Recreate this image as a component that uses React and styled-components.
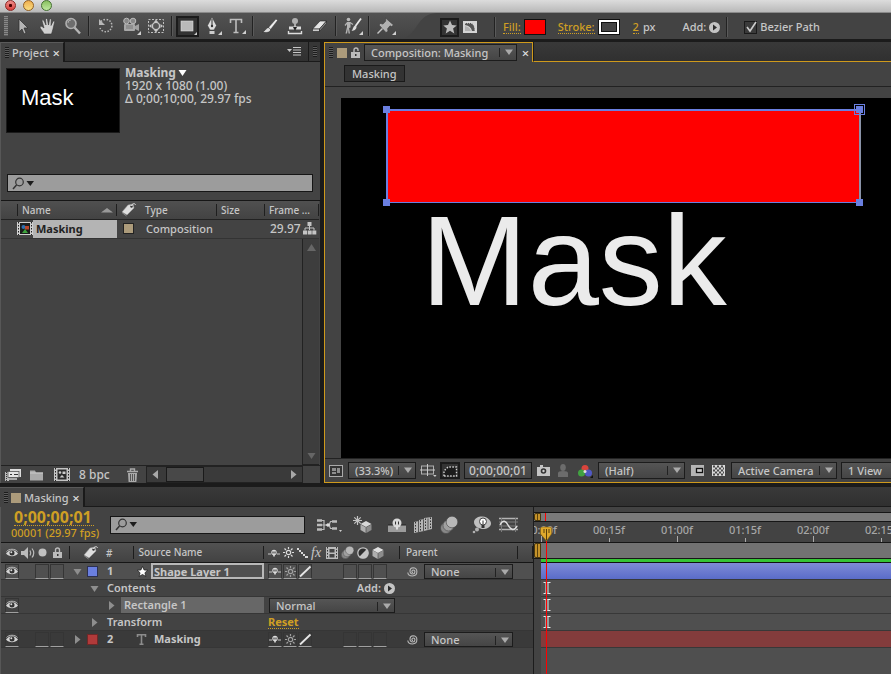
import React, { useState } from "react";
import styled, { createGlobalStyle } from "styled-components";

const GlobalStyle = createGlobalStyle`
  * {
    box-sizing: border-box;
  }
  body {
    margin: 0;
    background: #434343;
    color: #c6c6c6;
    font: 500 11px/14px "Noto Sans", "Open Sans", sans-serif;
  }
  button, input, select {
    font: inherit;
    color: inherit;
    margin: 0;
    padding: 0;
    border: 0;
    border-radius: 0;
    background: none;
  }
`;

/* ---------- icons ---------- */

const Svg = styled.svg`
  display: block;
  flex: none;
  overflow: visible;
`;

const Icon = ({ w = 16, h = 16, children }) => (
  <Svg width={w} height={h} viewBox={`0 0 ${w} ${h}`} fill="none" aria-hidden="true">
    {children}
  </Svg>
);

const Corner = () => <path d="M18 17v-4l-4 4z" fill="#d0d0d0" />;

const ArrowIcon = () => (
  <Icon w={20} h={18}>
    <path d="M6 2v13l3-3 2 5 2-1-2-5h4z" fill="#b4b4b4" stroke="#2c2c2c" strokeWidth=".7" />
  </Icon>
);

const HandIcon = () => (
  <Icon w={20} h={18}>
    <path
      d="M6 17C5 14 2 12 2 10c0-1 2-1 4 1L4 4c0-1.500 1.500-1.500 2-.2L8 8 7.500 2.500c0-1.500 1.800-1.500 2 0L10.500 8l1-5.500c.3-1.300 1.900-1 1.800.3L13 8.500l2-4c.6-1 2-.5 1.600.7L15 12c-.5 2-1 3-1.500 5z"
      fill="#cfcfcf"
      stroke="#333"
      strokeWidth=".6"
    />
  </Icon>
);

const ZoomIcon = () => (
  <Icon w={20} h={18}>
    <circle cx="8" cy="6.500" r="5" fill="#6e6e6e" stroke="#b0b0b0" strokeWidth="1.600" />
    <path d="M5 6a3 3 0 0 1 3-3" stroke="#aaa" />
    <path d="M11.500 10.500l5.500 6" stroke="#b5b5b5" strokeWidth="2.400" />
  </Icon>
);

const RotateIcon = () => (
  <Icon w={20} h={18}>
    <path d="M5 4.500A6.200 6.200 0 1 1 4 11" stroke="#b8b8b8" strokeWidth="1.500" strokeDasharray="1.500 1.500" />
    <path d="M3 2v6h6z" fill="#b8b8b8" />
  </Icon>
);

const CameraIcon = () => (
  <Icon w={20} h={18}>
    <circle cx="5.500" cy="4" r="2.800" fill="#888" stroke="#bbb" />
    <circle cx="12" cy="4" r="2.800" fill="#888" stroke="#bbb" />
    <rect x="3" y="7" width="11" height="7" rx="1" fill="#a8a8a8" />
    <path d="M5 9h7M5 11h7" stroke="#777" />
    <path d="M14 9l4-2v7l-4-2z" fill="#a0a0a0" />
    <path d="M20 18v-4l-4 4z" fill="#d0d0d0" />
  </Icon>
);

const PanBehindIcon = () => (
  <Icon w={18} h={18}>
    <rect x="1.500" y="2.500" width="15" height="13" stroke="#c0c0c0" strokeDasharray="2 1.500" />
    <circle cx="9" cy="9" r="3.600" fill="#555" stroke="#c8c8c8" strokeWidth="1.400" />
    <path d="M9 2.500l2 2.500H7zM9 15.500L7 13h4zM2 9l2.500-2v4zM16 9l-2.500 2V7z" fill="#c8c8c8" />
  </Icon>
);

const RectIcon = () => (
  <Icon w={21} h={19}>
    <rect x="4" y="4" width="12" height="10" fill="#b9b9b9" stroke="#dedede" strokeWidth=".6" />
    <path d="M20 18v-3l-3 3z" fill="#d0d0d0" />
  </Icon>
);

const PenIcon = () => (
  <Icon w={20} h={18}>
    <path d="M10 0l4.500 8.500-2.500 4.500h-4L5.500 8.500z" fill="#ddd" stroke="#333" strokeWidth=".5" />
    <path d="M10 2v7" stroke="#333" />
    <circle cx="10" cy="9" r="1.200" fill="#333" />
    <path d="M7.500 14h5v3h-5z" fill="#ccc" />
    <path d="M20 18v-4l-4 4z" fill="#d0d0d0" />
  </Icon>
);

const TypeIcon = () => (
  <Icon w={18} h={18}>
    <path d="M2.500 6V2.500h11V6M8 2.500v12.500M5.500 15.500h5" stroke="#bdbdbd" strokeWidth="1.600" />
    <Corner />
  </Icon>
);

const BrushIcon = () => (
  <Icon w={20} h={18}>
    <path d="M8.500 10.500L16 2l1.500 1.500-7 9z" fill="#eee" stroke="#333" strokeWidth=".4" />
    <path d="M9 10.500c-3 0-3 3-6.500 4.500 4 1 8 .5 8-2.500z" fill="#ddd" stroke="#222" strokeWidth=".5" />
  </Icon>
);

const StampIcon = () => (
  <Icon w={18} h={18}>
    <circle cx="9" cy="4" r="3" fill="#b0b0b0" />
    <path d="M8 6h2v4H8z" fill="#aaa" />
    <path d="M3 9.500h12v3H3z" fill="#ddd" />
    <path d="M7 10h4l-2 4z" fill="#222" />
    <path d="M2.500 14v2.500h13V14" stroke="#ddd" strokeWidth="1.400" />
  </Icon>
);

const EraserIcon = () => (
  <Icon w={20} h={18}>
    <path d="M2.500 12L10 4h6.500L9.500 12z" fill="#e6e6e6" stroke="#222" strokeWidth=".6" />
    <path d="M2.500 12v2.500h7V12z" fill="#ccc" stroke="#222" strokeWidth=".6" />
    <path d="M9.500 14.500l7-8V4l-7 8z" fill="#888" stroke="#222" strokeWidth=".6" />
  </Icon>
);

const RotoIcon = () => (
  <Icon w={20} h={18}>
    <circle cx="5.500" cy="2.500" r="1.800" fill="#bbb" />
    <path d="M4 5h3.500v5.500L6 11l1 5.500H5.500L5 12l-1 4.500H2.500L4 10z" fill="#b4b4b4" />
    <path d="M4.500 5.500L2 8.500M7 5.500l3 2" stroke="#b4b4b4" strokeWidth="1.200" />
    <path d="M12.500 9L18 1.500" stroke="#e8e8e8" strokeWidth="1.800" />
    <path d="M13.500 9.500c0 3-2 4-5 4.500 1.500-1.500 1.500-4.500 3.500-5.500z" fill="#ddd" />
    <path d="M20 18v-4l-4 4z" fill="#d0d0d0" />
  </Icon>
);

const PinIcon = () => (
  <Icon w={20} h={18}>
    <path d="M9.500 1l8 7-2 1.500-1.500-.7-2.500 3 .5 2.500-2 1.200L3 8l1.500-1.500 2.500.6 2.800-3z" fill="#b0b0b0" stroke="#333" strokeWidth=".5" />
    <path d="M6.500 11.500L1.500 16.500" stroke="#c4c4c4" strokeWidth="1.500" />
    <path d="M20 18v-4l-4 4z" fill="#d0d0d0" />
  </Icon>
);

const StarIcon = ({ size = 14, fill = "#bcbcbc", stroke = "none" }) => (
  <Svg width={size} height={size} viewBox="0 0 14 14" aria-hidden="true">
    <path d="M7 .5l2 4.500 4.700.4-3.600 3.200 1.200 4.800L7 10.800l-4.300 2.600 1.200-4.800L.3 5.400 5 5z" fill={fill} stroke={stroke} />
  </Svg>
);

const MaskIcon = () => (
  <Icon w={14} h={14}>
    <path d="M0 1h14v12H0z" fill="#d4d4d4" />
    <path d="M2 3h6q4 1.500 4 8H9Q8 6 2 5z" fill="#555" />
    <path d="M2 6q5 1 6 5H2z" fill="#b0b0b0" />
    <path d="M2 3h6q4 1.500 4 8" stroke="#eee" strokeDasharray="1 1" />
  </Icon>
);

const MenuIcon = () => (
  <Icon w={14} h={9}>
    <path d="M0 2h5L2.500 5z" fill="#c8c8c8" />
    <path d="M6 .5h8M6 3h8M6 5.500h8M6 8h8" stroke="#c8c8c8" />
  </Icon>
);

const LockIcon = ({ open }) => (
  <Icon w={9} h={11}>
    <path d={open ? "M3 5V3a2 2 0 0 1 4 0v1" : "M2.500 5V3a2 2 0 0 1 4 0v2"} stroke="#bbb" strokeWidth="1.400" />
    <path d="M0 5h9v6H0z" fill="#bbb" />
    <path d="M4 7h1.500v2H4z" fill="#333" />
  </Icon>
);

const SearchIcon = () => (
  <Icon w={22} h={13}>
    <circle cx="7.500" cy="5" r="3.800" stroke="#333" strokeWidth="1.200" />
    <path d="M4.500 8L1 12" stroke="#333" strokeWidth="1.500" />
    <path d="M14.500 4H22l-3.700 5z" fill="#1c1c1c" />
  </Icon>
);

const CompIcon = () => (
  <Icon w={16} h={13}>
    <rect width="16" height="13" fill="#d0d0d0" />
    <path d="M1.500 0v13M14.500 0v13" stroke="#222" strokeDasharray="1.500 1.500" />
    <rect x="3" y="1" width="10" height="11" fill="#1c1c1c" />
    <circle cx="6.500" cy="5" r="2" fill="#2d6fb0" />
    <rect x="8" y="4" width="4" height="3.500" fill="#b8452c" />
    <path d="M5 11l3-4 3 4z" fill="#3da43d" />
  </Icon>
);

const TagIcon = () => (
  <Icon w={15} h={13}>
    <path d="M1 9l6-7 5-1 1 4-7 7z" fill="#ddd" stroke="#999" strokeWidth=".5" />
    <circle cx="10.500" cy="3.500" r="1.200" fill="#333" />
    <path d="M10 3c2-3 4-3 4.500-1" stroke="#ddd" />
    <path d="M1 9.500L5.500 13" stroke="#888" />
  </Icon>
);

const SortIcon = () => (
  <Icon w={12} h={6}>
    <path d="M0 5.500L6 1l6 4.500z" fill="#999" />
  </Icon>
);

const FlowIcon = () => (
  <Icon w={13} h={13}>
    <path d="M4.500 0h4v4h-4zM0 8.500h4v4H0zM4.700 8.500h4v4h-4zM9.300 8.500h4v4h-4z" fill="#c4c4c4" />
    <path d="M6.500 4v4M2 8.500V6h9v2.500" stroke="#c4c4c4" />
  </Icon>
);

const FootageIcon = () => (
  <Icon w={16} h={13}>
    <path d="M5 1h11v8H5z" fill="#ddd" />
    <path d="M0 4h13v5H4v4H0z" fill="#bbb" />
    <rect x="3" y="3.500" width="11" height="6" fill="#e4e4e4" stroke="#555" strokeWidth=".8" />
    <path d="M5 6.500h2M9 6.500h4" stroke="#333" />
    <path d="M1.500 4v9" stroke="#333" strokeDasharray="1 1" />
    <path d="M4 11h8" stroke="#ccc" strokeWidth="1.500" />
  </Icon>
);

const FolderIcon = () => (
  <Icon w={14} h={12}>
    <path d="M0 1.500h5l1 2h7v8H0z" fill="#aaa" />
    <path d="M0 4h13" stroke="#ccc" />
  </Icon>
);

const FilmIcon = () => (
  <Icon w={16} h={13}>
    <rect width="16" height="13" fill="#c4c4c4" />
    <path d="M1.500 0v13M14.500 0v13" stroke="#222" strokeDasharray="1.500 1.500" />
    <rect x="3.500" y="1.500" width="9" height="10" fill="#2c2c2c" />
    <circle cx="6" cy="4.500" r="1.300" fill="#ccc" />
    <path d="M8.500 3.500h3v2.500h-3zM5.500 9.500L8 7l2.500 2.500z" fill="#ccc" />
  </Icon>
);

const TrashIcon = () => (
  <Icon w={11} h={14}>
    <path d="M0 3.500h11M3.500 3V1h4v2" stroke="#aaa" strokeWidth="1.400" />
    <path d="M1 5h9l-.6 9H1.600z" fill="#aaa" />
    <path d="M3.500 6v7M5.500 6v7M7.500 6v7" stroke="#555" />
  </Icon>
);

const Triangle = ({ dir = "down", fill = "#a8a8a8" }) => (
  <Icon w={9} h={9}>
    {dir === "down" && <path d="M.5 2h8l-4 6z" fill={fill} />}
    {dir === "up" && <path d="M0 8h9L4.500 1z" fill={fill} />}
    {dir === "right" && <path d="M2 0v9l5.500-4.500z" fill={fill} />}
    {dir === "left" && <path d="M7 0v9L1.500 4.500z" fill={fill} />}
  </Icon>
);

const PlayCircle = () => (
  <Icon w={11} h={11}>
    <circle cx="5.500" cy="5.500" r="5.500" fill="#c4c4c4" />
    <path d="M4 2.500v6l4-3z" fill="#2c2c2c" />
  </Icon>
);

const EyeIcon = () => (
  <Icon w={12} h={10}>
    <path d="M0 5.500C3 1 9 1 12 5.500 9 9 3 9 0 5.500z" fill="#d4d4d4" />
    <circle cx="6" cy="5" r="2.500" fill="#333" />
    <circle cx="5.300" cy="4.300" r="1" fill="#ddd" />
    <path d="M.5 3.500C3 .5 9 .5 11.500 3.500" stroke="#bbb" />
  </Icon>
);

const SpeakerIcon = () => (
  <Icon w={14} h={12}>
    <path d="M0 4h3l4-4v12L3 8H0z" fill="#bbb" />
    <path d="M9 3.500q1.500 2.500 0 5M11 1.500q3.500 4.500 0 9" stroke="#bbb" strokeWidth="1.200" />
  </Icon>
);

const DotIcon = () => (
  <Icon w={9} h={9}>
    <circle cx="4.500" cy="4.500" r="4" fill="#c0c0c0" />
  </Icon>
);

const ShyIcon = () => (
  <Icon w={12} h={10}>
    <path d="M0 6h3M9 6h3" stroke="#c8c8c8" />
    <circle cx="6" cy="4.500" r="2.700" fill="#ddd" />
    <path d="M5 3.500v2M7 3.500v2" stroke="#222" />
    <path d="M6 6.500v2" stroke="#ddd" strokeWidth="1.600" />
  </Icon>
);

const SunIcon = ({ color = "#ddd" }) => (
  <Icon w={11} h={11}>
    <circle cx="5.500" cy="5.500" r="2.200" stroke={color} strokeWidth="1.200" />
    <path d="M5.500 0v2M5.500 9v2M0 5.500h2M9 5.500h2M1.500 1.500l1.500 1.500M8 8l1.500 1.500M1.500 9.500L3 8M8 3l1.500-1.500" stroke={color} strokeWidth="1.200" />
  </Icon>
);

const StepsIcon = () => (
  <Icon w={11} h={10}>
    <path d="M0 1h2M2 3h2M4 5h2M6 7h2M8 9h3" stroke="#d8d8d8" strokeWidth="2" />
  </Icon>
);

const SlashIcon = () => (
  <Icon w={12} h={11}>
    <path d="M1 10.500L11.500.5" stroke="#e6e6e6" strokeWidth="1.800" />
  </Icon>
);

const FrameBlendIcon = () => (
  <Icon w={12} h={12}>
    <path d="M0 0h12v12H0z" fill="#bbb" />
    <path d="M1.500 0v12M10.500 0v12" stroke="#333" strokeDasharray="1.500 1.500" />
    <path d="M3.500 2h5v3.500h-5zM3.500 7h5v3.500h-5z" fill="#444" />
  </Icon>
);

const BlurIcon = ({ size = 12 }) => (
  <Svg width={size} height={size} viewBox="0 0 18 18" aria-hidden="true">
    <circle cx="6" cy="12" r="5.500" fill="#888" stroke="#444" strokeWidth=".6" />
    <circle cx="8.500" cy="9.500" r="5.500" fill="#a0a0a0" stroke="#444" strokeWidth=".6" />
    <circle cx="12" cy="6" r="5.800" fill="#b8b8b8" stroke="#444" strokeWidth=".6" />
  </Svg>
);

const AdjustIcon = () => (
  <Icon w={12} h={12}>
    <circle cx="6" cy="6" r="5.200" fill="#2e2e2e" stroke="#c4c4c4" strokeWidth="1.300" />
    <path d="M9.700 2.300A5.200 5.200 0 0 1 2.300 9.700z" fill="#c4c4c4" />
  </Icon>
);

const CubeIcon = ({ size = 12 }) => (
  <Svg width={size} height={size} viewBox="0 0 12 12" aria-hidden="true">
    <path d="M6 0l5.500 3L6 6 .5 3z" fill="#e0e0e0" />
    <path d="M.5 3.200L5.700 6v6L.5 9z" fill="#b0b0b0" />
    <path d="M11.500 3.200L6.300 6v6l5.200-3z" fill="#8c8c8c" />
  </Svg>
);

const SpiralIcon = () => (
  <Icon w={11} h={11}>
    <path d="M6 6.500C4.500 6.500 4.500 4 6.300 4c2.200 0 2.200 4-.5 4C2 8 2 2 6 1.800c5 0 5.500 8-.5 8.200C3 10 1 9 .8 6.500M6 1.800" stroke="#b8b8b8" strokeWidth="1.100" />
  </Icon>
);

const FlowchartIcon = () => (
  <Icon w={25} h={16}>
    <path d="M0 3.500h5M0 8h5M0 12.500h5M15 4.500h5M15 11.500h5" stroke="#bcbcbc" strokeWidth="2.600" />
    <path d="M5 3.500h2v9H5M5 8h5M15 4.500h-1.500L12 8l1.500 3.500H15" stroke="#bcbcbc" strokeWidth="1.200" />
    <path d="M8.500 8L11 6l2.500 2-2.500 2z" fill="#ddd" />
    <path d="M22 13h3l-1.500 2z" fill="#ccc" />
  </Icon>
);

const Draft3DIcon = () => (
  <Icon w={20} h={18}>
    <path d="M4.500 0v9M0 4.500h9M1.300 1.300l6.400 6.400M7.700 1.300L1.300 7.700" stroke="#c4c4c4" strokeWidth="1.200" />
    <path d="M13 5l5.500 3-5.500 3-5.500-3z" fill="#d8d8d8" />
    <path d="M7.500 8.500l5.200 2.800V17l-5.200-3z" fill="#b0b0b0" />
    <path d="M18.500 8.500l-5.200 2.800V17l5.200-3z" fill="#8c8c8c" />
  </Icon>
);

const HideShyIcon = () => (
  <Icon w={18} h={16}>
    <path d="M0 8h18v7H0z" fill="#9c9c9c" />
    <path d="M0 8h18" stroke="#222" />
    <circle cx="9" cy="6" r="4.500" fill="#d8d8d8" />
    <path d="M7.500 4.500v3M10.500 4.500v3" stroke="#333" />
    <path d="M8 9h2v3.500H8z" fill="#ddd" />
  </Icon>
);

const BlendIcon = () => (
  <Icon w={19} h={16}>
    <path d="M0 5l5-1v11l-5 1zM5 3l5-1v12l-5 1zM10 1l8-1v12l-8 2z" fill="#b4b4b4" />
    <path d="M1.500 5v10M6.500 3v11M11.500 1.500v12M16.500.5v12" stroke="#333" strokeDasharray="1.500 1.500" />
    <path d="M4.500 4v11M9.500 2.500v12M14 1.500v11" stroke="#555" />
  </Icon>
);

const BrainIcon = () => (
  <Icon w={20} h={18}>
    <path d="M2 6c0-4 5-6 9-5.500S19 4 19 7.500 15 13 11 13c-3 0-9-2-9-7z" fill="#c0c0c0" />
    <circle cx="5" cy="13.500" r="2" fill="#b0b0b0" />
    <circle cx="2" cy="16" r="1.300" fill="#b0b0b0" />
    <circle cx="11" cy="5.500" r="3.500" fill="#fff" stroke="#444" />
    <path d="M9.500 9h3v3h-3z" fill="#333" />
    <path d="M11 4.500v4" stroke="#333" />
  </Icon>
);

const GraphIcon = () => (
  <Icon w={20} h={16}>
    <path d="M0 1.500h19M0 12.500h19" stroke="#b4b4b4" strokeWidth="1.600" />
    <path d="M0 5h19M0 9h19M2.500 1v14M16.500 1v14" stroke="#7c7c7c" />
    <path d="M1 8c3-6 6-4 8 0s6 7 9 1" stroke="#ddd" strokeWidth="1.500" />
  </Icon>
);

const PreviewIcon = () => (
  <Icon w={14} h={12}>
    <rect x=".5" y=".5" width="13" height="11" fill="#333" stroke="#aaa" />
    <path d="M3 3h4v3H3zM3 7h4v2H3zM8 3h3v5H8z" fill="#8e8e8e" />
  </Icon>
);

const GridIcon = () => (
  <Icon w={16} h={13}>
    <rect x="1.500" y="2" width="12" height="8" stroke="#b0b0b0" />
    <path d="M0 6h15M7.500 0v12" stroke="#c8c8c8" />
    <path d="M13 11h3.500L15 13z" fill="#ccc" />
  </Icon>
);

const MaskShapeIcon = () => (
  <Icon w={15} h={12}>
    <path d="M1 11V6l4-4h8.500v9z" stroke="#d0d0d0" strokeWidth="1.400" strokeDasharray="1.500 1.500" fill="#1c1c1c" />
  </Icon>
);

const SnapshotIcon = () => (
  <Icon w={13} h={11}>
    <path d="M0 2h3V0h3v2h7v9H0z" fill="#c4c4c4" />
    <circle cx="6.500" cy="6" r="2.800" fill="#333" />
    <circle cx="6.500" cy="6" r="1.200" fill="#ccc" />
  </Icon>
);

const PersonIcon = () => (
  <Icon w={10} h={13}>
    <ellipse cx="5" cy="3.500" rx="2.800" ry="3.500" fill="#6c6c6c" />
    <path d="M0 13V9q0-2 5-2t5 2v4z" fill="#6c6c6c" />
  </Icon>
);

const RgbIcon = () => (
  <Icon w={14} h={12}>
    <circle cx="7" cy="3.500" r="3.500" fill="#d8443c" />
    <circle cx="3.500" cy="8" r="3.500" fill="#41a241" />
    <circle cx="10.500" cy="8" r="3.500" fill="#5058c4" />
    <circle cx="7" cy="6.500" r="1.500" fill="#e0e0e0" />
    <path d="M15 13v-3l-3 3z" fill="#111" />
  </Icon>
);

const RegionIcon = () => (
  <Icon w={13} h={11}>
    <rect width="13" height="11" fill="#b4b4b4" />
    <rect x="5.500" y="3.500" width="6" height="4" fill="#ccc" stroke="#111" strokeWidth="1.300" />
  </Icon>
);

const CheckerIcon = () => (
  <Icon w={13} h={11}>
    <rect width="13" height="11" fill="#d8d8d8" />
    <path
      d="M1 1.500h11M1 5.500h11M1 9.500h11"
      stroke="#4a4a4a"
      strokeWidth="2"
      strokeDasharray="2 2"
    />
    <path d="M3 3.500h9M3 7.500h9" stroke="#4a4a4a" strokeWidth="2" strokeDasharray="2 2" />
  </Icon>
);

const KeyIcon = () => (
  <Icon w={8} h={12}>
    <path d="M.5.5h2l1 1 1-1h3M.5 11.500h2l1-1 1 1h3M3 1v10M5 1v10" stroke="#e8e8e8" />
  </Icon>
);

/* ---------- shared parts ---------- */

const Row = styled.div`
  display: flex;
  align-items: center;
  gap: ${(p) => p.$gap || 0}px;
`;

const Push = styled.i`
  flex: none;
  width: ${(p) => p.$w}px;
`;

const IconButton = styled.button`
  display: flex;
  flex: none;
  align-items: center;
  justify-content: center;
  width: ${(p) => p.$w || 16}px;
  height: ${(p) => p.$h || 17}px;
  border: ${(p) => (p.$active ? "2px solid #1b1b1b" : "0")};
  background: ${(p) => (p.$active ? "#333" : "none")};
`;

const Grip = styled.div`
  flex: none;
  width: 4px;
  height: ${(p) => p.$h || 11}px;
  background: repeating-linear-gradient(${(p) => p.$tone || "#1c1c1c"} 0 1px, #5c5c5c 1px 2px);
`;

const Swatch = styled.span`
  flex: none;
  width: ${(p) => p.$size}px;
  height: ${(p) => p.$size}px;
  background: ${(p) => p.$color};
  border: 1px solid ${(p) => p.$edge || p.$color};
`;

const CloseButton = styled.button`
  width: 9px;
  color: #ddd;
  font-size: 13px;
  line-height: 14px;
`;

const SelectFrame = styled.div`
  position: relative;
  flex: none;
  width: ${(p) => p.$w}px;
  select {
    appearance: none;
    display: block;
    width: 100%;
    height: ${(p) => p.$h || 17}px;
    padding: 0 0 0 6px;
    border: 1px solid #1c1c1c;
    background: linear-gradient(#555, #454545);
    line-height: 14px;
  }
  svg {
    position: absolute;
    top: 4px;
    right: 4px;
    pointer-events: none;
  }
`;

const Select = ({ label, value, w, h }) => (
  <SelectFrame $w={w} $h={h}>
    <select aria-label={label} defaultValue={value}>
      <option>{value}</option>
    </select>
    <Icon w={14} h={9}>
      <path d="M.5 0v9" stroke="#222" />
      <path d="M6 1.500h8L10 7z" fill="#aaa" />
    </Icon>
  </SelectFrame>
);

const SearchBox = styled.label`
  display: flex;
  flex: ${(p) => (p.$w ? "none" : "1")};
  align-items: center;
  width: ${(p) => (p.$w ? p.$w + "px" : "auto")};
  height: 18px;
  padding-left: 4px;
  border: 1px solid #161616;
  background: #9c9c9c;
  input {
    flex: 1;
    min-width: 0;
    margin-left: 4px;
    color: #222;
    outline: none;
  }
`;

const Hot = styled.a`
  color: #cf9f24;
  line-height: 12px;
  text-decoration: none;
  border-bottom: 1px dotted #cf9f24;
`;

const TabStrip = styled.div`
  display: flex;
  height: 20px;
`;

const TabFill = styled.div`
  flex: 1;
  display: flex;
  align-items: center;
  justify-content: flex-end;
  padding-right: 7px;
  background: linear-gradient(#393939, #303030);
  border-left: 1px solid #1a1a1a;
  border-bottom: 1px solid ${(p) => p.$edge || "#1a1a1a"};
`;

const Tab = styled.div`
  display: flex;
  align-items: center;
  gap: ${(p) => p.$gap || 3}px;
  padding: 0 2px 0 4px;
  border-top: 1px solid ${(p) => p.$edge || "#5a5a5a"};
  border-right: 1px solid ${(p) => p.$edge || "#1a1a1a"};
  background: #434343;
`;

/* ---------- window ---------- */

const Window = styled.div`
  display: flex;
  flex-direction: column;
  min-height: 100vh;
  background: #1b1b1b;
  overflow: hidden;
`;

const TitleBar = styled.header`
  display: flex;
  gap: 7px;
  height: 13px;
  padding-left: 5px;
  background: linear-gradient(#dcdcdc, #b9b9b9);
  border-bottom: 1px solid #8a8a8a;
`;

const Light = styled.button`
  width: 11px;
  height: 11px;
  border: 1px solid ${(p) => p.$edge};
  border-radius: 50%;
  background: ${(p) => p.$dot ? `radial-gradient(circle, #4a0000 20%, transparent 30%), ` : ""}
    linear-gradient(${(p) => p.$from}, ${(p) => p.$to});
`;

const ToolBar = styled.nav`
  display: flex;
  align-items: center;
  height: 26px;
  margin-bottom: 3px;
  padding-left: 4px;
  background: linear-gradient(#525252, #434343);
  white-space: nowrap;
`;

const Divider = styled.i`
  flex: none;
  width: 2px;
  height: 20px;
  margin: 0 3px;
  border-left: 1px solid #222;
  border-right: 1px solid #5a5a5a;
`;

const Options = styled.div`
  display: flex;
  flex: 1;
  align-items: center;
  height: 100%;
  padding-top: 2px;
  background: #434343;
`;

const Curve = styled.svg`
  flex: none;
  width: 42px;
  height: 26px;
`;

const Paint = styled.button`
  width: 22px;
  height: 16px;
  margin-left: 3px;
  border: 1px solid #111;
  background: ${(p) => p.$color};
`;

const StrokePaint = styled(Paint)`
  background: #444;
  box-shadow: inset 0 0 0 2px #fff, inset 0 0 0 3px #111;
`;

const CheckLabel = styled.label`
  display: flex;
  align-items: center;
  gap: 3px;
  margin-left: 13px;
`;

const CheckBox = styled.span`
  display: grid;
  width: 13px;
  height: 13px;
  input, svg {
    grid-area: 1 / 1;
  }
  input {
    appearance: none;
    border: 1px solid #1a1a1a;
    background: #3a3a3a;
  }
`;

const tools = [
  ["Selection", ArrowIcon], ["Hand", HandIcon], ["Zoom", ZoomIcon], null,
  ["Rotation", RotateIcon], ["Camera", CameraIcon], ["Pan Behind", PanBehindIcon], null,
  ["Rectangle", RectIcon], ["Pen", PenIcon], ["Type", TypeIcon], null,
  ["Brush", BrushIcon], ["Clone Stamp", StampIcon], ["Eraser", EraserIcon], null,
  ["Roto Brush", RotoIcon], null,
  ["Puppet Pin", PinIcon],
];

const Tools = () => (
  <ToolBar>
    <Grip $h={20} $tone="#888" />
    <Push $w={2} />
    <Row>
      {tools.map((tool, i) => {
        if (!tool) return <Divider key={i} />;
        const [name, Glyph] = tool;
        const active = name === "Rectangle";
        return (
          <IconButton key={name} aria-label={name} $w={active ? 23 : 25} $h={21} $active={active}>
            <Glyph />
          </IconButton>
        );
      })}
    </Row>
    <Curve viewBox="0 0 42 26" aria-hidden="true">
      <path d="M0 26c12 0 15-8 21-16S32 0 42 0v26z" fill="#434343" />
    </Curve>
    <Options>
      <IconButton aria-label="Creates Shape" $w={19} $h={19} $active>
        <StarIcon />
      </IconButton>
      <IconButton aria-label="Creates Mask" $w={22}>
        <MaskIcon />
      </IconButton>
      <Row>
        <Push $w={10} />
        <Divider />
        <Push $w={4} />
        <Hot href="#fill">Fill:</Hot>
        <Paint aria-label="Fill colour" $color="#f00" />
        <Push $w={12} />
        <Hot href="#stroke">Stroke:</Hot>
        <StrokePaint aria-label="Stroke colour" />
        <Push $w={13} />
        <Hot href="#width">2</Hot>
        <Push $w={4} />
        <span>px</span>
        <Push $w={27} />
        <span>Add:</span>
        <IconButton aria-label="Add" $w={17}>
          <PlayCircle />
        </IconButton>
        <Divider />
      </Row>
      <CheckLabel>
        <CheckBox>
          <input type="checkbox" defaultChecked />
          <Icon w={13} h={13}>
            <path d="M3 6l3 4 6-9" stroke="#ccc" strokeWidth="1.600" />
          </Icon>
        </CheckBox>
        Bezier Path
      </CheckLabel>
    </Options>
  </ToolBar>
);

/* ---------- project ---------- */

const Upper = styled.div`
  display: flex;
  gap: 4px;
  margin-bottom: 4px;
`;

const ProjectPanel = styled.section`
  display: flex;
  flex: none;
  flex-direction: column;
  width: 320px;
  background: #434343;
  border-left: 1px solid #575757;
`;

const TabEnd = styled.div`
  display: flex;
  align-items: center;
  justify-content: center;
  width: 12px;
  background: #363636;
  border-left: 1px solid #1a1a1a;
  border-bottom: 1px solid #1a1a1a;
`;

const Summary = styled.div`
  display: flex;
  gap: 5px;
  height: 106px;
  padding: 4px 5px;
`;

const Thumb = styled.div`
  flex: none;
  width: 114px;
  height: 65px;
  margin-top: 2px;
  padding: 16px 14px;
  border: 1px solid #1a1a1a;
  background: #000;
  color: #fff;
  font: 22px/25px "Liberation Sans", Arial, sans-serif;
`;

const Facts = styled.div`
  font-size: 12px;
  line-height: 13px;
  white-space: nowrap;
  b {
    display: flex;
    align-items: center;
    gap: 2px;
    font-size: 12px;
  }
`;

const SearchRow = styled.div`
  display: flex;
  margin: 6px 7px 8px 6px;
`;

const ListArea = styled.div`
  display: flex;
  flex: 1;
  flex-direction: column;
  border-top: 1px solid #161616;
`;

const ItemTable = styled.table`
  width: 318px;
  table-layout: fixed;
  border-collapse: collapse;
  th {
    height: 18px;
    padding: 0 0 0 4px;
    background: linear-gradient(#505050, #434343);
    border-bottom: 1px solid #222;
    font-size: 10px;
    font-weight: 500;
    text-align: left;
    white-space: nowrap;
  }
  td {
    height: 18px;
    padding: 0 0 0 5px;
    border-bottom: 1px solid #333;
    white-space: nowrap;
  }
`;

const ItemHead = styled.div`
  margin-left: 12px;
  padding-left: 4px;
  border-left: 1px solid #1f1f1f;
`;

const HeadCell = styled.div`
  display: flex;
  align-items: center;
  justify-content: space-between;
  height: 12px;
  border-right: 1px solid #1f1f1f;
  padding-right: 3px;
`;

const ItemName = styled.div`
  display: flex;
  align-items: center;
  margin-left: 11px;
  b {
    flex: 1;
    height: 18px;
    padding-left: 3px;
    background: #b4b4b4;
    color: #222;
    line-height: 18px;
  }
`;

const Rate = styled.div`
  display: flex;
  align-items: center;
  gap: 2px;
  font-size: 12px;
`;

const Scroller = styled.div`
  display: flex;
  flex: 1;
  flex-direction: column;
  align-items: center;
  justify-content: space-between;
  align-self: flex-end;
  width: 17px;
  margin-right: 1px;
  padding: 4px 0;
  border-left: 1px solid #222;
  border-bottom: 1px solid #222;
  background: #3d3d3d;
`;

const ProjectFooter = styled.div`
  display: flex;
  align-items: center;
  gap: 8px;
  height: 18px;
  padding: 0 17px 0 4px;
  border-top: 1px solid #222;
`;

const TextButton = styled.button`
  font-size: 12px;
`;

const HScroll = styled.div`
  display: flex;
  flex: 1;
  align-items: center;
  justify-content: space-between;
  height: 17px;
  padding: 0 4px;
  border: 1px solid #222;
  background: #3a3a3a;
  i {
    width: 38px;
    height: 15px;
    margin: 0 auto 0 6px;
    border: 1px solid #1a1a1a;
    background: #484848;
  }
`;

const Project = () => (
  <ProjectPanel>
    <TabStrip>
      <Tab>
        <Grip />
        <span>Project</span>
        <CloseButton aria-label="Close Project">×</CloseButton>
      </Tab>
      <TabFill>
        <IconButton aria-label="Panel menu" $w={14}>
          <MenuIcon />
        </IconButton>
      </TabFill>
      <TabEnd>
        <Grip />
      </TabEnd>
    </TabStrip>
    <Summary>
      <Thumb>Mask</Thumb>
      <Facts>
        <b>
          Masking <Triangle fill="#fff" />
        </b>
        <div>1920 x 1080 (1.00)</div>
        <div>Δ 0;00;10;00, 29.97 fps</div>
      </Facts>
    </Summary>
    <SearchRow>
      <SearchBox>
        <SearchIcon />
        <input type="search" aria-label="Search project" />
      </SearchBox>
    </SearchRow>
    <ListArea>
      <ItemTable>
        <colgroup>
          <col width="116" />
          <col width="24" />
          <col width="76" />
          <col width="48" />
          <col width="54" />
        </colgroup>
        <thead>
          <tr>
            <th>
              <ItemHead>
                <HeadCell>
                  Name <SortIcon />
                </HeadCell>
              </ItemHead>
            </th>
            <th aria-label="Label">
              <TagIcon />
            </th>
            <th><HeadCell>Type</HeadCell></th>
            <th><HeadCell>Size</HeadCell></th>
            <th><HeadCell>Frame ...</HeadCell></th>
          </tr>
        </thead>
        <tbody>
          <tr>
            <td>
              <ItemName>
                <CompIcon />
                <b>Masking</b>
              </ItemName>
            </td>
            <td>
              <Row>
                <Push $w={1} />
                <Swatch $size={11} $color="#ac9b7b" $edge="#222" />
              </Row>
            </td>
            <td>Composition</td>
            <td />
            <td>
              <Rate>
                29.97 <FlowIcon />
              </Rate>
            </td>
          </tr>
        </tbody>
      </ItemTable>
      <Scroller>
        <Triangle dir="up" fill="#666" />
        <Triangle fill="#666" />
      </Scroller>
    </ListArea>
    <ProjectFooter>
      <IconButton aria-label="Interpret Footage"><FootageIcon /></IconButton>
      <IconButton aria-label="New Folder"><FolderIcon /></IconButton>
      <IconButton aria-label="New Composition" $w={18}><FilmIcon /></IconButton>
      <TextButton>8 bpc</TextButton>
      <Push $w={1} />
      <IconButton aria-label="Delete" $w={11}><TrashIcon /></IconButton>
      <HScroll>
        <Triangle dir="left" />
        <i />
        <Triangle dir="right" />
      </HScroll>
    </ProjectFooter>
  </ProjectPanel>
);

/* ---------- composition ---------- */

const CompPanel = styled.section`
  display: flex;
  flex: 1;
  flex-direction: column;
  min-width: 0;
  background: #434343;
  border-left: 1px solid #cf9a1c;
  border-bottom: 1px solid #cf9a1c;
`;

const Crumbs = styled.div`
  height: 25px;
  padding: 3px 19px;
  border-bottom: 1px solid #222;
  button {
    height: 17px;
    padding: 0 7px;
    border: 1px solid #1a1a1a;
    background: #333;
    line-height: 14px;
  }
`;

const Stage = styled.div`
  position: relative;
  height: 360px;
  margin: 11px 0 0 16px;
  background: #000;
  overflow: hidden;
`;

const ShapeLayer = styled.div`
  position: absolute;
  left: 45px;
  top: 11px;
  width: 475px;
  height: 94px;
  border: 2px solid #6a7fe0;
  border-right-color: #8a93a8;
  border-bottom-width: 1px;
  background: #f00;
`;

const Handle = styled.i`
  position: absolute;
  left: ${(p) => (p.$right ? "auto" : "-5px")};
  right: ${(p) => (p.$right ? "-4px" : "auto")};
  top: ${(p) => (p.$bottom ? "auto" : "-5px")};
  bottom: ${(p) => (p.$bottom ? "-4px" : "auto")};
  width: 7px;
  height: 7px;
  background: #6a7fe0;
  outline: ${(p) => (p.$first ? "1px solid #6a7fe0" : "0")};
  outline-offset: 1px;
`;

const TextLayer = styled.div`
  position: absolute;
  left: 80px;
  top: 91px;
  color: #ebebeb;
  font: 128px/144px "Liberation Sans", Arial, sans-serif;
`;

const CompFooter = styled.div`
  display: flex;
  align-items: center;
  gap: 4px;
  height: 24px;
  padding-left: 3px;
  border-top: 1px solid #222;
  white-space: nowrap;
  overflow: hidden;
`;

const TimeButton = styled.button`
  flex: none;
  width: 68px;
  height: 17px;
  border: 1px solid #1a1a1a;
  background: linear-gradient(#505050, #454545);
  font-size: 12px;
  line-height: 14px;
`;

const Composition = () => (
  <CompPanel>
    <TabStrip>
      <Tab $edge="#cf9a1c" $gap={4}>
        <Grip />
        <Swatch $size={10} $color="#ac9b7b" />
        <LockIcon open />
        <Select label="Viewer" value="Composition: Masking" w={153} />
        <CloseButton aria-label="Close Composition">×</CloseButton>
      </Tab>
      <TabFill $edge="#cf9a1c" />
    </TabStrip>
    <Crumbs>
      <button>Masking</button>
    </Crumbs>
    <Stage>
      <ShapeLayer>
        <Handle />
        <Handle $right $first />
        <Handle $bottom />
        <Handle $right $bottom />
      </ShapeLayer>
      <TextLayer>Mask</TextLayer>
    </Stage>
    <CompFooter>
      <IconButton aria-label="Always Preview" $w={16}><PreviewIcon /></IconButton>
      <Select label="Magnification" value="(33.3%)" w={68} />
      <IconButton aria-label="Grid and guides"><GridIcon /></IconButton>
      <IconButton aria-label="Toggle mask visibility" $w={20} $active><MaskShapeIcon /></IconButton>
      <TimeButton>0;00;00;01</TimeButton>
      <IconButton aria-label="Take Snapshot" $w={14}><SnapshotIcon /></IconButton>
      <IconButton aria-label="Show Snapshot" $w={18}><PersonIcon /></IconButton>
      <IconButton aria-label="Show Channel" $w={18}><RgbIcon /></IconButton>
      <Select label="Resolution" value="(Half)" w={87} />
      <IconButton aria-label="Region of Interest" $w={16}><RegionIcon /></IconButton>
      <IconButton aria-label="Transparency Grid" $w={18}><CheckerIcon /></IconButton>
      <Select label="3D View" value="Active Camera" w={106} />
      <Select label="View Layout" value="1 View" w={72} />
    </CompFooter>
  </CompPanel>
);

/* ---------- timeline ---------- */

const TimelinePanel = styled.section`
  display: flex;
  flex: 1;
  flex-direction: column;
  background: #434343;
`;

const TimelineBody = styled.div`
  display: flex;
  flex: 1;
`;

const Layers = styled.div`
  flex: none;
  width: 533px;
  border-left: 1px solid #575757;
`;

const TimelineTop = styled.div`
  display: flex;
  align-items: center;
  height: 36px;
  border-bottom: 1px solid #161616;
`;

const TimeReadout = styled.div`
  width: 109px;
  padding-left: 10px;
  color: #cf9f24;
  font-size: 11px;
  line-height: 13px;
  white-space: nowrap;
`;

const TimeCode = styled(Hot)`
  display: block;
  width: 80px;
  margin-left: 3px;
  font-size: 16px;
  font-weight: 700;
  line-height: 15px;
`;

const ColumnHead = styled.div`
  display: grid;
  grid-template-columns: 69px 194px 136px 1fr;
  align-items: center;
  height: 20px;
  background: linear-gradient(#525252, #424242);
  border-bottom: 1px solid #161616;
  font-size: 10px;
  > div {
    display: flex;
    align-items: center;
    height: 13px;
    border-right: 1px solid #1c1c1c;
  }
`;

const SourceName = styled.span`
  height: 13px;
  padding-left: 4px;
  border-left: 1px solid #1c1c1c;
  line-height: 13px;
`;

const ParentHead = styled.span`
  width: 112px;
  height: 13px;
  border-right: 1px solid #1c1c1c;
  line-height: 13px;
`;

const Fx = styled.i`
  width: 12px;
  font: italic 14px/13px "Liberation Serif", serif;
`;

const LayerRow = styled.div`
  display: grid;
  grid-template-columns: 69px 194px 136px 1fr;
  height: 17px;
  background: ${(p) => p.$bg || "#434343"};
  border-bottom: 1px solid #363636;
  > div {
    display: flex;
    align-items: center;
    min-width: 0;
    height: 16px;
  }
`;

const Slot = styled.button`
  display: flex;
  flex: none;
  align-items: center;
  justify-content: center;
  width: 14px;
  height: 15px;
  margin-right: 1px;
  border: 1px solid #353535;
  border-bottom-color: #a0a0a0;
`;

const Num = styled.b`
  width: 30px;
  margin-left: 9px;
`;

const NameInput = styled.input`
  flex: 1;
  min-width: 0;
  height: 16px;
  margin-left: 3px;
  padding-left: 1px;
  border: 2px solid #b8b8b8;
  line-height: 12px;
  && {
    font-weight: 700;
  }
`;

const GroupName = styled.span`
  margin-left: 8px;
  font-weight: ${(p) => (p.$strong ? 700 : 600)};
`;

const SelectedName = styled.span`
  flex: 1;
  height: 16px;
  margin-left: 5px;
  padding-left: 3px;
  background: #676767;
  font-weight: 600;
  line-height: 16px;
`;

const AddCell = styled.div`
  justify-content: flex-end;
  padding-right: 2px;
  font-weight: 600;
`;

const Switches = () => (
  <>
    <Push $w={4} />
    <Slot aria-label="Shy"><ShyIcon /></Slot>
    <Slot aria-label="Collapse"><SunIcon color="#a0a0a0" /></Slot>
    <Slot aria-label="Quality"><SlashIcon /></Slot>
    <Push $w={30} />
    <Slot aria-label="Motion Blur" />
    <Slot aria-label="Adjustment Layer" />
    <Slot aria-label="3D Layer" />
  </>
);

const AvSlots = ({ full }) => (
  <>
    <Push $w={4} />
    <Slot aria-label="Video"><EyeIcon /></Slot>
    {full && (
      <>
        <Push $w={15} />
        <Slot aria-label="Solo" />
        <Slot aria-label="Lock" />
      </>
    )}
  </>
);

const Parent = () => (
  <>
    <Push $w={7} />
    <SpiralIcon />
    <Push $w={6} />
    <Select label="Parent" value="None" w={89} h={15} />
  </>
);

const TwirlButton = styled.button`
  flex: none;
  margin-left: ${(p) => p.$indent}px;
`;

const Twirl = ({ indent, open }) => (
  <TwirlButton aria-label="Toggle" $indent={indent}>
    <Triangle dir={open ? "down" : "right"} fill="#8e8e8e" />
  </TwirlButton>
);

const Tracks = styled.div`
  position: relative;
  display: flex;
  flex: 1;
  flex-direction: column;
  min-width: 0;
  padding-top: 5px;
  border-left: 1px solid #1c1c1c;
  overflow: hidden;
`;

const Navigator = styled.div`
  display: flex;
  flex: none;
  height: 10px;
  border: solid #161616;
  border-width: 1px 0;
  background: #7a7a7a;
`;

const RangeGrip = styled.i`
  width: 7px;
  background: repeating-linear-gradient(90deg, #c4922a 0 2px, #5c420c 2px 3px);
  border: 1px solid #4a380e;
  border-radius: 2px 0 0 2px;
`;

const Ruler = styled.div`
  display: flex;
  flex: none;
  height: 20px;
  margin-left: -27px;
`;

const Mark = styled.div`
  display: flex;
  flex: none;
  flex-direction: column;
  align-items: center;
  justify-content: space-between;
  width: 68px;
  padding-top: 1px;
  color: #a6a6a6;
  font-size: 11px;
  line-height: 13px;
  &::after {
    content: "";
    width: 1px;
    height: ${(p) => (p.$major ? 6 : 4)}px;
    background: #aaa;
  }
`;

const WorkArea = styled(Navigator)`
  height: 17px;
  background: #727272;
`;

const Lane = styled.div`
  flex: none;
  height: 17px;
  margin-left: 7px;
  padding: 2px 0 0 2px;
  background: ${(p) => p.$bg || "#4f4f4f"};
  border-bottom: 1px solid #383838;
`;

const CacheBar = styled.div`
  flex: none;
  height: 4px;
  margin-left: 7px;
  background: #35c435;
  border-bottom: 1px solid #111;
`;

const EmptyLane = styled.div`
  flex: 1;
  margin-left: 7px;
  background: #4f4f4f;
`;

const Playhead = styled.div`
  position: absolute;
  top: 20px;
  bottom: 0;
  left: 6px;
  width: 12px;
  &::after {
    content: "";
    position: absolute;
    top: 14px;
    bottom: 0;
    left: 6px;
    width: 1px;
    background: #f00;
  }
`;

const NavTick = styled.i`
  position: absolute;
  top: 6px;
  left: 11px;
  width: 1px;
  height: 8px;
  background: #f00;
`;

const marks = ["00:00f", "00:15f", "01:00f", "01:15f", "02:00f", "02:15f"];

const Timeline = () => {
  const [name, setName] = useState("Shape Layer 1");

  return (
    <TimelinePanel>
      <TabStrip>
        <Tab>
          <Grip />
          <Swatch $size={10} $color="#ac9b7b" />
          <span>Masking</span>
          <CloseButton aria-label="Close Masking">×</CloseButton>
        </Tab>
        <TabFill />
      </TabStrip>
      <TimelineBody>
        <Layers>
          <TimelineTop>
            <TimeReadout>
              <TimeCode href="#time">0;00;00;01</TimeCode>
              00001 (29.97 fps)
            </TimeReadout>
            <SearchBox $w={195}>
              <SearchIcon />
              <input type="search" aria-label="Search layers" />
            </SearchBox>
            <Push $w={12} />
            <Row $gap={9}>
              <IconButton aria-label="Mini-Flowchart" $w={25}><FlowchartIcon /></IconButton>
              <IconButton aria-label="Draft 3D" $w={24}><Draft3DIcon /></IconButton>
            </Row>
            <Push $w={13} />
            <Row $gap={8}>
              <IconButton aria-label="Hide Shy Layers" $w={18}><HideShyIcon /></IconButton>
              <IconButton aria-label="Frame Blending" $w={18}><BlendIcon /></IconButton>
              <IconButton aria-label="Motion Blur" $w={18}><BlurIcon size={18} /></IconButton>
            </Row>
            <Push $w={14} />
            <Row $gap={7}>
              <IconButton aria-label="Brainstorm" $w={20}><BrainIcon /></IconButton>
              <IconButton aria-label="Graph Editor" $w={20}><GraphIcon /></IconButton>
            </Row>
          </TimelineTop>
          <ColumnHead>
            <div>
              <Push $w={5} />
              <Row $gap={3}>
                <EyeIcon />
                <SpeakerIcon />
                <DotIcon />
              </Row>
              <Push $w={6} />
              <LockIcon />
            </div>
            <div>
              <Push $w={13} />
              <TagIcon />
              <Push $w={8} />
              #
              <Push $w={21} />
              <SourceName>Source Name</SourceName>
            </div>
            <div>
              <Push $w={4} />
              <Row $gap={3}>
                <ShyIcon />
                <SunIcon />
                <StepsIcon />
                <Fx>fx</Fx>
                <FrameBlendIcon />
                <BlurIcon size={13} />
                <AdjustIcon />
                <CubeIcon />
              </Row>
            </div>
            <div>
              <Push $w={6} />
              <ParentHead>Parent</ParentHead>
            </div>
          </ColumnHead>

          <LayerRow $bg="#505050">
            <div><AvSlots full /></div>
            <div>
              <Twirl indent={3} open />
              <Push $w={5} />
              <Swatch $size={11} $color="#6a7fe0" $edge="#2c3050" />
              <Num>1</Num>
              <StarIcon size={11} fill="#fff" stroke="#222" />
              <NameInput aria-label="Layer name" value={name} onChange={(e) => setName(e.target.value)} />
            </div>
            <div><Switches /></div>
            <div><Parent /></div>
          </LayerRow>
          <LayerRow>
            <div />
            <div>
              <Twirl indent={20} open />
              <GroupName>Contents</GroupName>
            </div>
            <AddCell>
              Add:
              <IconButton aria-label="Add to contents" $w={17}><PlayCircle /></IconButton>
            </AddCell>
            <div />
          </LayerRow>
          <LayerRow>
            <div><AvSlots /></div>
            <div>
              <Twirl indent={37} />
              <SelectedName>Rectangle 1</SelectedName>
            </div>
            <div>
              <Push $w={5} />
              <Select label="Blend Mode" value="Normal" w={126} h={15} />
            </div>
            <div />
          </LayerRow>
          <LayerRow>
            <div />
            <div>
              <Twirl indent={20} />
              <GroupName>Transform</GroupName>
            </div>
            <div>
              <Push $w={4} />
              <Hot href="#reset"><b>Reset</b></Hot>
            </div>
            <div />
          </LayerRow>
          <LayerRow $bg="#3a3a3a">
            <div><AvSlots full /></div>
            <div>
              <Twirl indent={3} />
              <Push $w={5} />
              <Swatch $size={11} $color="#b03a3a" $edge="#702828" />
              <Num>2</Num>
              <Icon w={9} h={11}>
                <path d="M.5 3V.8h8V3M4.500 1v9M2.500 10.300h4" stroke="#8c8c8c" strokeWidth="1.600" />
              </Icon>
              <GroupName $strong>Masking</GroupName>
            </div>
            <div><Switches /></div>
            <div><Parent /></div>
          </LayerRow>
        </Layers>

        <Tracks>
          <Navigator><RangeGrip /></Navigator>
          <NavTick />
          <Ruler>
            {marks.map((m, i) => (
              <Mark key={m} $major={i % 2 === 0}>{m}</Mark>
            ))}
          </Ruler>
          <WorkArea><RangeGrip /></WorkArea>
          <CacheBar />
          <Lane $bg="linear-gradient(#7f8bd6, #5a6cc8)" />
          <Lane><KeyIcon /></Lane>
          <Lane><KeyIcon /></Lane>
          <Lane><KeyIcon /></Lane>
          <Lane $bg="#833c3c" />
          <EmptyLane />
          <Playhead>
            <Icon w={12} h={16}>
              <path d="M1.500 0h9l1 1v6L6.500 14 .5 7V1z" fill="#e0a92c" stroke="#7c5a10" strokeWidth=".6" />
              <path d="M4 2v4M6.500 2v11M9 2v4" stroke="#5a3e08" />
            </Icon>
          </Playhead>
        </Tracks>
      </TimelineBody>
    </TimelinePanel>
  );
};

export default function App() {
  return (
    <Window>
      <GlobalStyle />
      <TitleBar>
        <Light aria-label="Close" $from="#f0908c" $to="#d8403c" $edge="#8c2824" $dot />
        <Light aria-label="Minimize" $from="#f0b050" $to="#f8dc80" $edge="#946020" />
        <Light aria-label="Zoom" $from="#88c060" $to="#c0e8a0" $edge="#447030" />
      </TitleBar>
      <Tools />
      <Upper>
        <Project />
        <Composition />
      </Upper>
      <Timeline />
    </Window>
  );
}
